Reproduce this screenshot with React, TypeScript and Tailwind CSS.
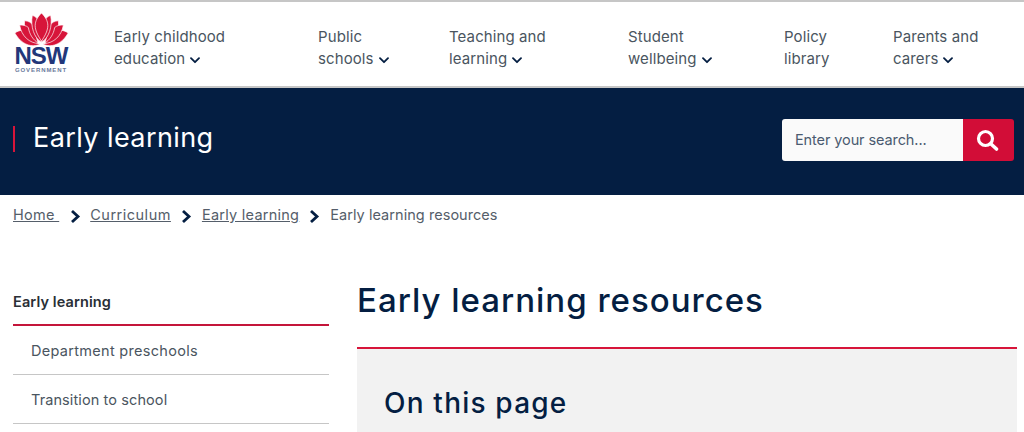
function Chevron() {
  return (
    <svg width="10" height="7" viewBox="0 0 10 7" className="ml-[5px] inline-block align-[0px]" fill="none" stroke="#041e42" strokeWidth="1.8" strokeLinecap="round" strokeLinejoin="round">
      <path d="M1 1.200 5 5.200 9 1.200" />
    </svg>
  );
}
function Crumb() {
  return (
    <svg width="11" height="15" viewBox="0 0 11 15" className="shrink-0 mt-[4px]" fill="none" stroke="#041e42" strokeWidth="2.800" strokeLinejoin="miter">
      <path d="M2 2 8 7.500 2 13" />
    </svg>
  );
}
function Side() {
  return (
    <g fill="#d7153a" stroke="#fff" strokeWidth="0.7" strokeLinejoin="round">
      <path d="M10 8C14 8 17 10 19 13L24 31C15 29 9 20 10 8z" />
      <path d="M18 2.500C21 3 24 6 25 9L27.500 30C20 26 16 14 18 2.500z" />
      <path d="M0 20.500C5 17.500 9 17 12 19C14 25 19 30 26 32C18 36 7 33 0 20.500z" />
      <path d="M5 12.500C8 12 12 13 14 15C15 22 19 28 25 31.500C15 31 7 24 5 12.500z" />
    </g>
  );
}
function Logo() {
  return (
    <div className="w-[56px] flex flex-col items-center shrink-0 mt-[-2px]">
      <svg width="55" height="34" viewBox="0 0 55 35">
        <Side />
        <g transform="translate(55,0) scale(-1,1)"><Side /></g>
        <path d="M27.500 0C31.500 4 34 8 34 13C34 19 30 25 27.500 29C25 25 21 19 21 13C21 8 23.500 4 27.500 0z" fill="#d7153a" stroke="#fff" strokeWidth="0.7" />
      </svg>
      <div className="text-[24px] leading-[17px] font-bold tracking-[-1px] text-[#22377a] font-['Liberation_Sans',sans-serif]">NSW</div>
      <div className="text-[6px] leading-[6px] font-bold tracking-[0.9px] text-[#6a7a9c] whitespace-nowrap mt-[3px] font-['Liberation_Sans',sans-serif]">GOVERNMENT</div>
    </div>
  );
}
const nav: [string, string, boolean, string][] = [
  ["Early childhood", "education", true, "w-[204px]"],
  ["Public", "schools", true, "w-[131px]"],
  ["Teaching and", "learning", true, "w-[179px]"],
  ["Student", "wellbeing", true, "w-[156px]"],
  ["Policy", "library", false, "w-[109px]"],
  ["Parents and", "carers", true, "w-[110px]"],
];
export default function App() {
  return (
    <div className="w-[1024px] h-[432px] overflow-hidden bg-white font-['Inter',sans-serif] text-[#22272b]">
      <header className="h-[88px] border-y-2 border-[#c6c6c6] flex items-center pl-[13px]">
        <Logo />
        <nav className="flex ml-[45px] text-[15px] leading-[22px] tracking-[0.1px] text-[#4a5560] mt-[8px]">
          {nav.map(([a, b, c, w]) => (
            <div key={a} className={w}>
              <div>{a}</div>
              <div>{b}{c && <Chevron />}</div>
            </div>
          ))}
        </nav>
      </header>
      <section className="h-[107px] bg-[#041e42] flex items-center justify-between pl-[13px] pr-[10px]">
        <div className="border-l-2 border-[#d7153a] h-[26px] pl-[18px] flex items-center text-[27px] tracking-[0.42px] text-white mt-[-6px]">Early learning</div>
        <div className="flex h-[42px] w-[232px] rounded-[3px] overflow-hidden mt-[-4px]">
          <div className="flex-1 bg-[#fafafa] pl-[13px] flex items-center text-[14.500px] tracking-[-0.1px] text-[#4a5a70]">Enter your search...</div>
          <div className="w-[51px] bg-[#d20d37] flex items-center justify-center">
            <svg width="24" height="24" viewBox="0 0 24 24" fill="none" stroke="#fff" strokeLinecap="round" className="mr-[3px]">
              <circle cx="10.500" cy="10.500" r="7" strokeWidth="3.200" />
              <path d="M16 16l5.500 5" strokeWidth="3.600" />
            </svg>
          </div>
        </div>
      </section>
      <div className="flex items-start pl-[13px] pt-[10px] h-[47px] text-[14.500px] leading-[20px] tracking-[0.05px] text-[#555e6a]">
        <a className="underline whitespace-pre tracking-[0.3px]">Home </a>
        <span className="ml-[11px] mr-[9px]"><Crumb /></span>
        <a className="underline tracking-[0.5px]">Curriculum</a>
        <span className="ml-[10px] mr-[10px]"><Crumb /></span>
        <a className="underline tracking-[0.25px]">Early learning</a>
        <span className="ml-[10px] mr-[10px]"><Crumb /></span>
        <span>Early learning resources</span>
      </div>
      <div className="flex pl-[13px] pr-[7px] items-start">
        <aside className="w-[316px] shrink-0 text-[14.500px] tracking-[0.1px]">
          <div className="h-[84px] flex items-end pb-[11px] border-b-2 border-[#c4153a] font-semibold text-[#2a2f36]">
            <span className="block">Early learning</span>
          </div>
          <div className="h-[49px] pl-[18px] pt-[2px] flex items-center border-b border-[#c6c6c6] text-[#4a5560] tracking-[0.3px]">Department preschools</div>
          <div className="h-[49px] pl-[18px] pt-[2px] flex items-center border-b border-[#c6c6c6] text-[#4a5560]">Transition to school</div>
        </aside>
        <main className="ml-[28px] flex-1">
          <h1 className="text-[33px] leading-[40px] mt-[38px] font-medium tracking-[1px] text-[#041e42]">Early learning resources</h1>
          <div className="mt-[27px] border-t-2 border-[#d7153a] bg-[#f2f2f2] h-[200px] pl-[27px] pt-[37px]">
            <h2 className="text-[28px] leading-[34px] font-medium tracking-[1.2px] text-[#041e42]">On this page</h2>
          </div>
        </main>
      </div>
    </div>
  );
}
